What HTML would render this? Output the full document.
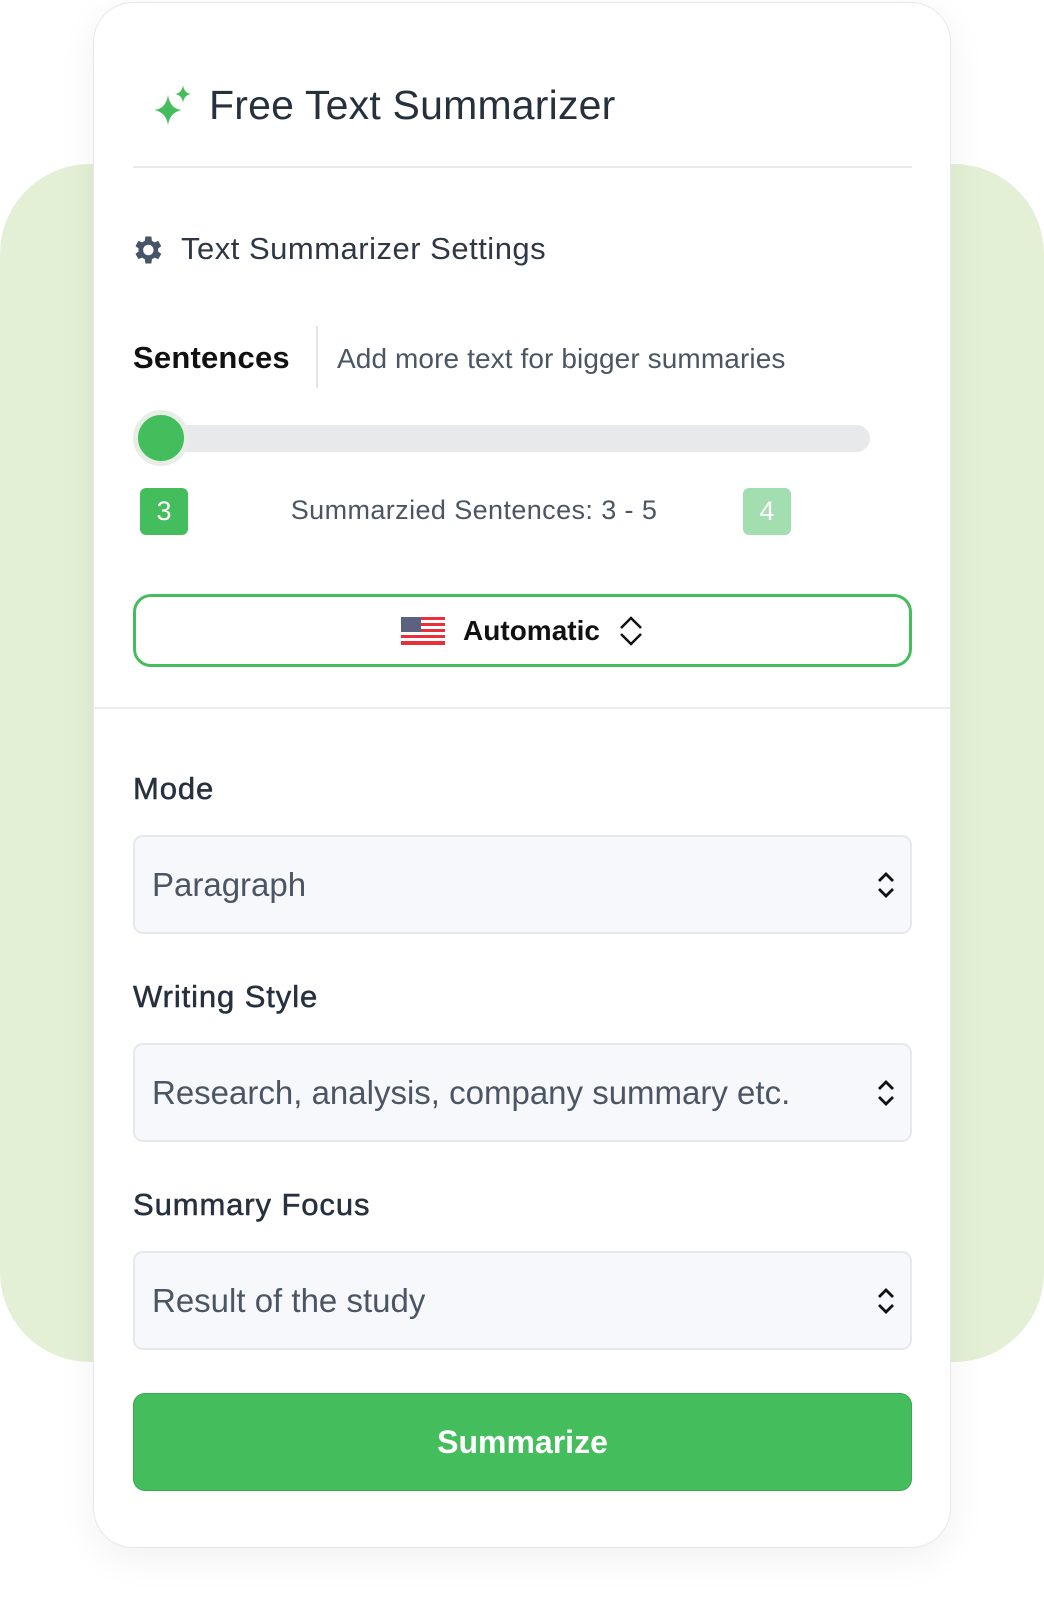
<!DOCTYPE html>
<html><head><meta charset="utf-8"><style>
*{box-sizing:border-box;margin:0;padding:0}
body{width:1044px;height:1618px;background:#fff;position:relative;overflow:hidden;font-family:"Liberation Sans",sans-serif;color:#1f2937}
.bg{position:absolute;left:0;right:0;top:164px;height:1198px;background:#e3f0d6;border-radius:90px}
.card{position:absolute;left:93px;top:2px;width:858px;height:1546px;background:#fff;border:1px solid #e6e8eb;border-radius:40px;box-shadow:0 10px 40px rgba(0,0,0,.06)}
.abs{position:absolute}
.title{left:115px;top:79px;font-size:41px;color:#27303d;letter-spacing:.2px}
.hr{left:39px;width:779px;top:163px;height:2px;background:#e9eaec}
.set{left:87px;top:228px;font-size:31px;color:#2f3744;letter-spacing:.5px}
.sent{left:39px;top:337px;font-size:31px;font-weight:bold;color:#111;letter-spacing:.2px}
.vl{left:222px;top:323px;width:2px;height:62px;background:#e3e5e8}
.hint{left:243px;top:340px;font-size:28px;color:#4b5563;letter-spacing:.1px}
.track{left:68px;top:422px;width:708px;height:27px;background:#e8e9eb;border-radius:14px}
.thumb{left:39px;top:407px;width:56px;height:56px;border-radius:50%;background:#44bd5c;border:5px solid #e8eee6}
.b{top:485px;width:48px;height:47px;border-radius:6px;color:#fff;font-size:27px;text-align:center;line-height:47px}
.sum{left:120px;width:520px;text-align:center;top:492px;font-size:27px;color:#4b5563;letter-spacing:.4px}
.auto{left:39px;top:591px;width:779px;height:73px;border:3.5px solid #44bd5c;border-radius:18px;display:flex;align-items:center;justify-content:center;font-size:28px;font-weight:bold;color:#111;gap:18px}
.sec{left:0;right:0;top:704px;height:2px;background:#ececee}
.lab{left:39px;font-size:31px;color:#27303d;letter-spacing:.9px;-webkit-text-stroke:.5px #27303d}
.sel{left:39px;width:779px;height:99px;background:#f6f8fb;border:2px solid #e6e8ec;border-radius:10px;font-size:33px;color:#4b5563;padding-left:17px;line-height:95px;letter-spacing:0}
.sel svg{position:absolute;right:15px;top:34px}
.btn{left:39px;top:1390px;width:779px;height:98px;background:#44bd5c;border:1px solid #3aa852;border-radius:12px;color:#fff;font-weight:bold;font-size:32px;text-align:center;line-height:96px}
</style></head><body>
<div class="bg"></div>
<div class="card">
<svg class="abs" style="left:58px;top:80px" width="42" height="42" viewBox="0 0 42 42"><path d="M16 12 Q18 26 30 27 Q18 29 16 42 Q14 29 2 27 Q14 26 16 12Z" fill="#44bd5c"/><path d="M31 2 Q32 10 39 11 Q32 12 31 20 Q30 12 23 11 Q30 10 31 2Z" fill="#44bd5c"/></svg>
<div class="abs title">Free Text Summarizer</div>
<div class="abs hr"></div>
<svg class="abs" style="left:35px;top:229px" width="36" height="36" viewBox="0 0 24 24"><path fill="#475569" d="M19.4 13a7.5 7.5 0 0 0 0-2l2.1-1.6-2-3.5-2.5 1a7.6 7.6 0 0 0-1.7-1L14.9 3h-4l-.4 2.9a7.6 7.6 0 0 0-1.7 1l-2.5-1-2 3.5L6.4 11a7.5 7.5 0 0 0 0 2l-2.1 1.6 2 3.5 2.5-1a7.6 7.6 0 0 0 1.7 1l.4 2.9h4l.4-2.9a7.6 7.6 0 0 0 1.7-1l2.5 1 2-3.5zM12.9 15.5a3.5 3.5 0 1 1 0-7 3.5 3.5 0 0 1 0 7z"/></svg>
<div class="abs set">Text Summarizer Settings</div>
<div class="abs sent">Sentences</div>
<div class="abs vl"></div>
<div class="abs hint">Add more text for bigger summaries</div>
<div class="abs track"></div>
<div class="abs thumb"></div>
<div class="abs b" style="left:46px;background:#44bd5c">3</div>
<div class="abs sum">Summarzied Sentences: 3 - 5</div>
<div class="abs b" style="left:649px;background:#a3deb0">4</div>
<div class="abs auto"><svg width="44" height="28" viewBox="0 0 44 28"><rect width="44" height="28" fill="#fff"/><g fill="#e8303a"><rect y="0" width="44" height="3"/><rect y="6" width="44" height="3"/><rect y="12" width="44" height="3"/><rect y="18" width="44" height="3"/><rect y="24" width="44" height="4"/></g><rect width="20" height="15" fill="#5b6280"/></svg><span>Automatic</span><svg width="26" height="30" viewBox="0 0 26 30"><path d="M3 12 L13 2 L23 12 M3 18 L13 28 L23 18" fill="none" stroke="#111" stroke-width="2.5"/></svg></div>
<div class="abs sec"></div>
<div class="abs lab" style="top:768px">Mode</div>
<div class="abs sel" style="top:832px">Paragraph<svg width="18" height="28" viewBox="0 0 18 28"><path d="M2 10 L9 3 L16 10 M2 18 L9 25 L16 18" fill="none" stroke="#111" stroke-width="2.8"/></svg></div>
<div class="abs lab" style="top:976px">Writing Style</div>
<div class="abs sel" style="top:1040px">Research, analysis, company summary etc.<svg width="18" height="28" viewBox="0 0 18 28"><path d="M2 10 L9 3 L16 10 M2 18 L9 25 L16 18" fill="none" stroke="#111" stroke-width="2.8"/></svg></div>
<div class="abs lab" style="top:1184px">Summary Focus</div>
<div class="abs sel" style="top:1248px">Result of the study<svg width="18" height="28" viewBox="0 0 18 28"><path d="M2 10 L9 3 L16 10 M2 18 L9 25 L16 18" fill="none" stroke="#111" stroke-width="2.8"/></svg></div>
<div class="abs btn">Summarize</div>
</div>
</body></html>
